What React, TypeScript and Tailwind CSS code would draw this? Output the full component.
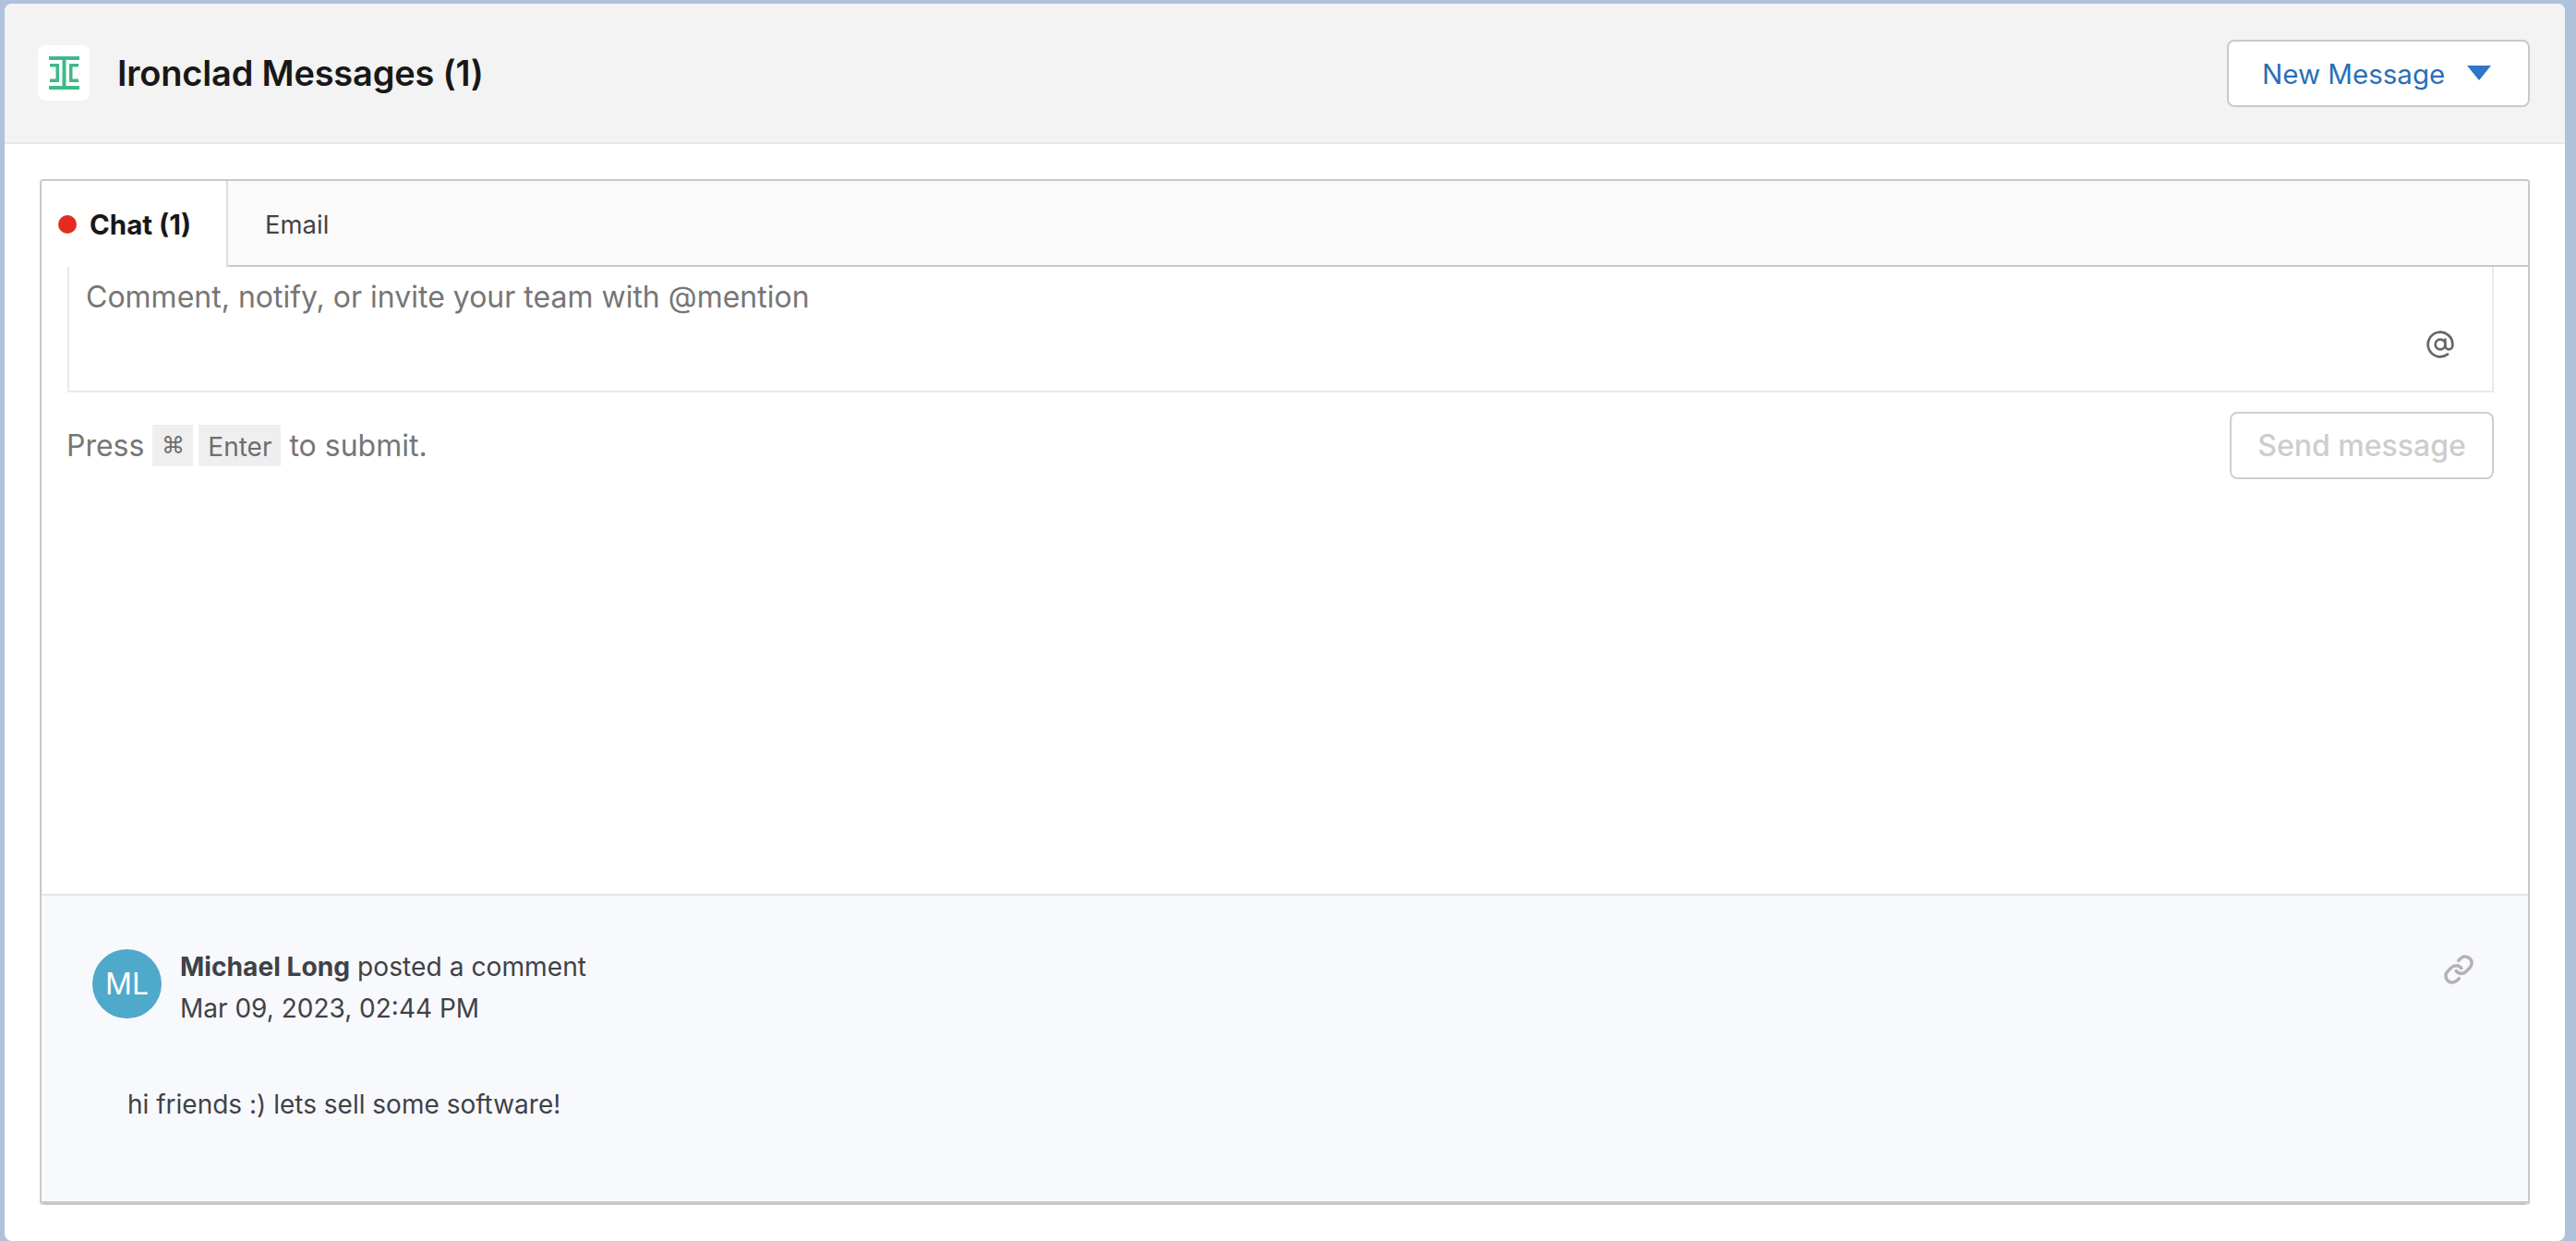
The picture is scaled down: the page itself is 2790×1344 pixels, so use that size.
import { AtSign, Link } from 'lucide-react';

const FONT = "font-['Inter','Noto_Sans',sans-serif]";

function IroncladMark() {
  return (
    <svg width="33" height="36" viewBox="0 0 33 36" fill="#3fb98a">
      <rect x="0" y="0" width="33" height="4" />
      <rect x="0" y="32" width="33" height="4" />
      <rect x="14.5" y="4" width="4" height="28" />
      <path d="M1 8h10v20H1v-3.500h6.500v-13H1z" />
      <path d="M32 8H22v20h10v-3.500h-6.500v-13H32z" />
    </svg>
  );
}

function Header() {
  return (
    <header className="flex h-[152px] shrink-0 items-center justify-between border-b-2 border-[#e8e8e8] bg-[#f3f3f3] pr-[38px] pl-[36px]">
      <div className="flex items-center gap-[30px]">
        <div className="flex h-[60px] w-[56px] items-center justify-center rounded-lg bg-white">
          <IroncladMark />
        </div>
        <h1 className="text-[38px] leading-none font-semibold tracking-[-0.2px] text-[#181818]">
          Ironclad Messages (1)
        </h1>
      </div>
      <button className="flex h-[73px] w-[328px] items-center rounded-lg border-2 border-[#c9c9c9] bg-white pl-[36px]">
        <span className="pt-[3px] text-[29.500px] leading-none text-[#2a6fb5]">New Message</span>
        <svg className="ml-[24px]" width="26" height="16" viewBox="0 0 26 16" fill="#2f75c9">
          <path d="M0 0h26L13 16z" />
        </svg>
      </button>
    </header>
  );
}

function Tabs() {
  return (
    <div className="flex h-[93px] shrink-0 bg-[#fafafa]">
      <div className="flex w-[202px] items-center border-r-2 border-[#dcdcdc] bg-white pl-[18px]">
        <span className="h-[20px] w-[20px] rounded-full bg-[#e52b20]" />
        <span className="ml-[14px] pt-[2px] text-[29.500px] font-bold text-[#181818]">Chat (1)</span>
      </div>
      <div className="flex flex-1 items-center border-b-2 border-[#c9c9c9] pl-[40px]">
        <span className="pt-[4px] text-[27.500px] text-[#444444]">Email</span>
      </div>
    </div>
  );
}

function Composer() {
  return (
    <div className="flex shrink-0 flex-col pr-[37px] pl-[27px]">
      <div className="relative ml-[1px] h-[136px] border-x-2 border-b-2 border-[#e9e9e9] pl-[18px]">
        <p className="pt-[13px] text-[32px] leading-[40px] text-[#767676]">
          Comment, notify, or invite your team with @mention
        </p>
        <AtSign className="absolute top-[68px] right-[40px] h-[32px] w-[32px] text-[#666666]" strokeWidth={2} />
      </div>
      <div className="mt-[21px] flex items-center justify-between">
        <div className="flex items-center text-[32px] text-[#767676]">
          <span>Press</span>
          <kbd className="ml-[9px] flex h-[45px] w-[44px] items-center justify-center bg-[#efefef] font-['DejaVu_Sans',sans-serif] text-[25px] text-[#6d6d6d]">
            ⌘
          </kbd>
          <kbd className={`ml-[6px] flex h-[45px] w-[89px] items-center justify-center bg-[#efefef] pt-[2px] text-[28px] text-[#6d6d6d] ${FONT}`}>
            Enter
          </kbd>
          <span className="ml-[9px]">to submit.</span>
        </div>
        <button className="h-[73px] w-[286px] rounded-lg border-2 border-[#cfcfcf] bg-white text-[32px] font-medium text-[#cdcdcd]">
          Send message
        </button>
      </div>
    </div>
  );
}

function Comment() {
  return (
    <div className="relative h-[337px] shrink-0 rounded-b border-t-2 border-b-[4px] border-t-[#e6e6e6] border-b-[#c6c8cc] bg-[#f8f9fc] pt-[58px] pl-[55px]">
      <div className="flex items-start">
        <div className="flex h-[75px] w-[75px] items-center justify-center rounded-full bg-[#4fa9cb] text-[32px] text-white">
          ML
        </div>
        <div className="ml-[20px] flex flex-col leading-[45px] text-[#3f4247]">
          <p className="-mt-[3px] text-[28.200px]">
            <span className="font-bold">Michael Long</span> posted a comment
          </p>
          <p className="text-[28px]">Mar 09, 2023, 02:44 PM</p>
        </div>
      </div>
      <p className="mt-[61px] ml-[38px] text-[28px] leading-[40px] text-[#3f4247]">
        hi friends :) lets sell some software!
      </p>
      <Link className="absolute top-[63px] right-[58px] h-[34px] w-[34px] text-[#b3b3b3]" strokeWidth={2.5} />
    </div>
  );
}

export default function App() {
  return (
    <div className={`flex h-screen w-full flex-col overflow-hidden bg-[#b0c1dc] pt-[4px] pr-[12px] pl-[5px] ${FONT}`}>
      <div className="flex min-h-0 flex-1 flex-col overflow-hidden rounded-t-lg rounded-b-lg bg-white">
        <Header />
        <main className="flex min-h-0 flex-1 flex-col pt-[38px] pr-[38px] pb-[39px] pl-[38px]">
          <section className="flex min-h-0 flex-1 flex-col overflow-hidden rounded border-x-2 border-t-2 border-[#c9c9c9]">
            <Tabs />
            <Composer />
            <div className="flex-1" />
            <Comment />
          </section>
        </main>
      </div>
    </div>
  );
}
